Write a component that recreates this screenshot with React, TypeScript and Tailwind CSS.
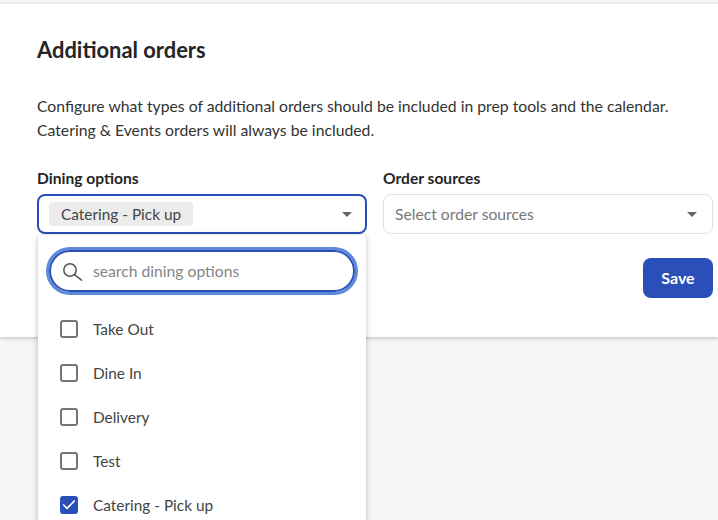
import { Check } from 'lucide-react'

const OPTIONS = [
  { label: 'Take Out', checked: false },
  { label: 'Dine In', checked: false },
  { label: 'Delivery', checked: false },
  { label: 'Test', checked: false },
  { label: 'Catering - Pick up', checked: true },
]

function Caret() {
  return <span className="h-0 w-0 border-x-[5px] border-t-[5px] border-x-transparent border-t-[#666666]" />
}

export default function App() {
  return (
    <div className="h-[520px] w-[718px] overflow-hidden bg-[#f6f6f6] pt-[4px] font-['Lato','Noto_Sans',sans-serif] text-[#252525]">
      <div className="h-[333px] bg-white px-[37px] pt-[32px] shadow-[0_1px_4px_rgba(0,0,0,0.25)]">
        <h2 className="text-[21.9px] leading-[27px] font-bold text-[#252525]">Additional orders</h2>

        <p className="mt-[31px] text-[15.75px] leading-[24px] text-[#333333]">
          Configure what types of additional orders should be included in prep tools and the calendar.
          <br />
          Catering &amp; Events orders will always be included.
        </p>

        <div className="mt-[24px] flex w-[676px] gap-[16px]">
          {/* Dining options */}
          <div className="relative z-10 w-[330px] shrink-0">
            <label className="block text-[15.6px] leading-[24px] font-bold text-[#252525]">Dining options</label>
            <div className="mt-[4px] flex h-[40px] items-center justify-between rounded-[8px] border-2 border-[#2b4fb9] bg-white pr-[13px] pl-[10px]">
              <span className="rounded-[4px] bg-[#ececec] px-[12px] text-[15.4px] leading-[24px] text-[#444444]">Catering - Pick up</span>
              <Caret />
            </div>

            {/* Dropdown */}
            <div className="absolute top-[69px] left-[1px] h-[400px] w-[328px] rounded-t-[4px] bg-white pt-[15px] shadow-[0_1px_6px_rgba(0,0,0,0.25)]">
              <div className="mx-[11px] flex h-[42px] items-center gap-[10px] rounded-[21px] border-2 border-[#2b4fb9] pl-[12px] ring-[3px] ring-[#5c8ad6]">
                <svg width="20" height="18" viewBox="0 0 20 18" fill="none" stroke="#555555" strokeWidth="1.5" className="mt-[2px] shrink-0">
                  <circle cx="7" cy="7" r="6.2" />
                  <path d="M11.6 11.6 L19 17.6" />
                </svg>
                <span className="pt-[2px] text-[15.7px] text-[#858585]">search dining options</span>
              </div>
              <ul className="mt-[15px]">
                {OPTIONS.map(o => (
                  <li key={o.label} className="flex h-[44px] items-center gap-[15px] pl-[22px]">
                    {o.checked ? (
                      <span className="flex h-[18px] w-[18px] items-center justify-center rounded-[3px] bg-[#2b4fb9]">
                        <Check size={16} strokeWidth={2.5} className="text-white" />
                      </span>
                    ) : (
                      <span className="h-[18px] w-[18px] rounded-[3px] border-2 border-[#757575] bg-white" />
                    )}
                    <span className="pt-[2px] text-[15.4px] text-[#444444]">{o.label}</span>
                  </li>
                ))}
              </ul>
            </div>
          </div>

          {/* Order sources */}
          <div className="w-[330px] shrink-0">
            <label className="block text-[15.6px] leading-[24px] font-bold text-[#252525]">Order sources</label>
            <div className="mt-[4px] flex h-[40px] items-center justify-between rounded-[8px] border border-[#e0e0e0] bg-white pr-[15px] pl-[11px]">
              <span className="pt-[1px] text-[15.7px] text-[#777777]">Select order sources</span>
              <Caret />
            </div>
            <div className="mt-[24px] flex justify-end">
              <button type="button" className="h-[40px] w-[70px] rounded-[8px] bg-[#2b4fb9] text-[16px] font-bold text-white">Save</button>
            </div>
          </div>
        </div>
      </div>
    </div>
  )
}
